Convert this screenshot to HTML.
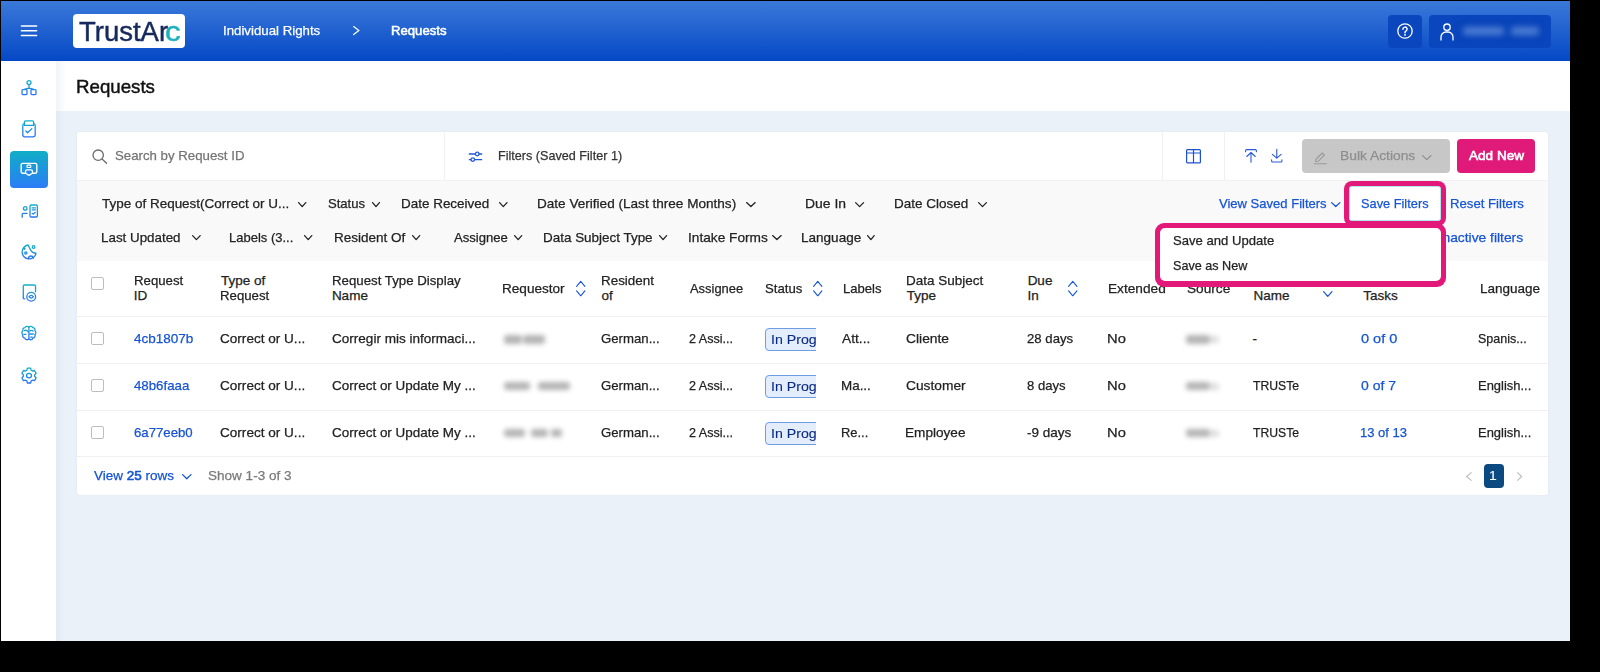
<!DOCTYPE html>
<html><head><meta charset="utf-8"><style>
html,body{margin:0;padding:0;background:#000;width:1600px;height:672px;overflow:hidden}
.t{position:absolute;white-space:nowrap;line-height:1;-webkit-text-stroke:0.25px currentColor;font-family:"Liberation Sans",sans-serif;transform-origin:0 0}
.r{position:absolute}
svg.r{overflow:visible}
</style></head><body>
<div class="r" style="left:1px;top:1px;width:1569px;height:640px;background:#EAF1F9"></div>
<div class="r" style="left:1px;top:1px;width:1569px;height:60px;background:linear-gradient(#3a79d9,#0548c6)"></div>
<svg class="r" style="left:20px;top:24px;width:18px;height:14px;" viewBox="0 0 18 14" fill="none"><path d="M1.4 2h15.2M1.4 6.8h15.2M1.4 11.4h15.2" stroke="#fff" stroke-width="1.5" stroke-linecap="round"/></svg>
<div class="r" style="left:72.5px;top:14px;width:112.0px;height:34px;background:#fff;border-radius:4px"></div>
<div class="t" style="left:78.88px;top:19.04px;font-size:27px;color:#17295c;transform:scaleX(1.0180);-webkit-text-stroke:0.45px #17295c;">TrustAr</div>
<div class="t" style="left:164.67px;top:19.04px;font-size:27px;color:#1fb0bd;transform:scaleX(1.1597);-webkit-text-stroke:0.45px #1fb0bd;">c</div>
<div class="t" style="left:223.28px;top:24.32px;font-size:13.5px;color:#fff;transform:scaleX(0.9813);">Individual Rights</div>
<svg class="r" style="left:352.8px;top:26.3px;width:6.5px;height:9.2px;overflow:visible;" viewBox="0 0 6.5 9.2" fill="none"><path d="M0.6 0.6 L5.9 4.6 L0.6 8.6" stroke="#fff" stroke-width="1.25" stroke-linecap="round" stroke-linejoin="round"/></svg>
<div class="t" style="left:390.92px;top:24.32px;font-size:13.5px;color:#fff;transform:scaleX(0.9741);-webkit-text-stroke:0.55px #fff;">Requests</div>
<div class="r" style="left:1388.3px;top:14.5px;width:33.5px;height:33.0px;background:#0a47bf;border-radius:4px"></div>
<svg class="r" style="left:1397px;top:22.5px;width:16px;height:16.0px;" viewBox="0 0 16 16" fill="none"><circle cx="8" cy="8" r="7.2" stroke="#fff" stroke-width="1.3"/><path d="M5.9 6.2a2.1 2.1 0 1 1 3 1.9c-.6.3-.9.7-.9 1.3v.4" stroke="#fff" stroke-width="1.5" stroke-linecap="round"/><circle cx="8" cy="11.9" r=".9" fill="#fff"/></svg>
<div class="r" style="left:1429.3px;top:14.5px;width:121.5px;height:33.0px;background:#0a47bf;border-radius:4px"></div>
<svg class="r" style="left:1440px;top:22.5px;width:14px;height:17.5px;" viewBox="0 0 14 17.5" fill="none"><circle cx="7" cy="4.2" r="3.2" stroke="#fff" stroke-width="1.3"/><path d="M1 17.5v-3.5a5 5 0 0 1 5-5h2a5 5 0 0 1 5 5v3.5" stroke="#fff" stroke-width="1.3"/></svg>
<div class="r" style="left:1455px;top:18px;width:91px;height:26px;background:rgba(0,40,150,.12);filter:blur(2px)"></div>
<div class="r" style="left:1463px;top:27px;width:41px;height:8px;background:#7fa6e6;filter:blur(3px);opacity:.6;border-radius:3px"></div>
<div class="r" style="left:1511px;top:27px;width:28px;height:8px;background:#7fa6e6;filter:blur(3px);opacity:.6;border-radius:3px"></div>
<div class="r" style="left:1px;top:61px;width:55.4px;height:580px;background:#fff"></div>
<div class="r" style="left:56px;top:61px;width:8px;height:580px;background:linear-gradient(90deg,rgba(30,60,120,.045),rgba(30,60,120,0))"></div>
<div class="r" style="left:56.4px;top:61px;width:1513.6px;height:50px;background:#fff"></div>
<div class="r" style="left:56px;top:61px;width:10px;height:50px;background:linear-gradient(90deg,rgba(30,60,120,.06),rgba(30,60,120,0))"></div>
<div class="t" style="left:76.17px;top:77.22px;font-size:19px;color:#111;transform:scaleX(0.9830);-webkit-text-stroke:0.45px #111;">Requests</div>
<svg class="r" style="left:21px;top:79.5px;width:16px;height:15.5px;" viewBox="0 0 16 15.5" fill="none"><defs><linearGradient id="g1" gradientUnits="userSpaceOnUse" x1="0" y1="0" x2="0" y2="15.5"><stop offset="0" stop-color="#12b4c8"/><stop offset="1" stop-color="#2a6ff5"/></linearGradient></defs><circle cx="8" cy="2.6" r="2" stroke="url(#g1)" stroke-width="1.3" stroke-linecap="round" stroke-linejoin="round"/><path d="M8 4.6v3.6M3.8 9.2 8 8.2l4.2 1" stroke="url(#g1)" stroke-width="1.3" stroke-linecap="round" stroke-linejoin="round"/><rect x="1" y="9.6" width="5" height="5" rx=".8" stroke="url(#g1)" stroke-width="1.3" stroke-linecap="round" stroke-linejoin="round"/><rect x="10" y="9.6" width="5" height="5" rx=".8" stroke="url(#g1)" stroke-width="1.3" stroke-linecap="round" stroke-linejoin="round"/></svg>
<svg class="r" style="left:22px;top:119.5px;width:14px;height:17.5px;" viewBox="0 0 14 17.5" fill="none"><defs><linearGradient id="g2" gradientUnits="userSpaceOnUse" x1="0" y1="0" x2="0" y2="17.5"><stop offset="0" stop-color="#12b4c8"/><stop offset="1" stop-color="#2a6ff5"/></linearGradient></defs><rect x="0.8" y="3.6" width="12.4" height="13.2" rx="1.8" stroke="url(#g2)" stroke-width="1.3" stroke-linecap="round" stroke-linejoin="round"/><path d="M2.4 5.4V2c0-.6.5-1.1 1.1-1.1h7c.6 0 1.1.5 1.1 1.1v3.4Z" fill="#fff" stroke="url(#g2)" stroke-width="1.3" stroke-linecap="round" stroke-linejoin="round"/><path d="m3.9 11 1.7 1.8 4.2-4.2" stroke="url(#g2)" stroke-width="1.3" stroke-linecap="round" stroke-linejoin="round"/></svg>
<div class="r" style="left:10px;top:151px;width:38px;height:37px;background:linear-gradient(#10aec6,#2b7cf6);border-radius:4px"></div>
<svg class="r" style="left:20px;top:162px;width:18px;height:14px;" viewBox="0 0 18 14" fill="none"><rect x="1.2" y="1.4" width="15.6" height="9.8" rx="1.4" stroke="#fff" stroke-width="1.4"/><rect x="7" y="3.1" width="3.8" height="2.4" rx=".6" stroke="#fff" stroke-width="1.1"/><path d="M5.6 11.2V9.1c0-.7.5-1.2 1.2-1.2h4.4c.7 0 1.2.5 1.2 1.2v2.1L9 13.4Z" stroke="#fff" stroke-width="1.3" stroke-linejoin="round" fill="#2089e8"/></svg>
<svg class="r" style="left:19.5px;top:203.5px;width:18.0px;height:14.0px;" viewBox="0 0 18 14" fill="none"><defs><linearGradient id="g3" gradientUnits="userSpaceOnUse" x1="0" y1="0" x2="0" y2="14.0"><stop offset="0" stop-color="#12b4c8"/><stop offset="1" stop-color="#2a6ff5"/></linearGradient></defs><circle cx="5.2" cy="4.4" r="1.8" stroke="url(#g3)" stroke-width="1.3" stroke-linecap="round" stroke-linejoin="round"/><path d="M2.2 13.2v-3c0-.5.4-.9.9-.9h4" stroke="url(#g3)" stroke-width="1.3" stroke-linecap="round" stroke-linejoin="round"/><rect x="10" y="1" width="7.4" height="12" rx="1.2" stroke="url(#g3)" stroke-width="1.3" stroke-linecap="round" stroke-linejoin="round"/><path d="M12.2 3.9h3.2M12.2 5.8h3.2M12.3 9.4l.9.7 1.9-1.6" stroke="url(#g3)" stroke-width="1.3" stroke-linecap="round" stroke-linejoin="round" stroke-width="1.05"/></svg>
<svg class="r" style="left:21px;top:243.5px;width:16px;height:16.0px;" viewBox="0 0 16 16" fill="none"><defs><linearGradient id="g4" gradientUnits="userSpaceOnUse" x1="0" y1="0" x2="0" y2="16.0"><stop offset="0" stop-color="#12b4c8"/><stop offset="1" stop-color="#2a6ff5"/></linearGradient></defs><path d="M7.2 1A7 7 0 1 0 15 9.2C13 9.2 10.6 7.8 9.4 5.6 8.6 4.2 7.8 2.6 7.2 1Z" stroke="url(#g4)" stroke-width="1.3" stroke-linecap="round" stroke-linejoin="round" stroke-width="1.2"/><circle cx="12.6" cy="3" r="1.3" stroke="url(#g4)" stroke-width="1.3" stroke-linecap="round" stroke-linejoin="round" stroke-width="1.2"/><circle cx="4.8" cy="9" r="1.1" stroke="url(#g4)" stroke-width="1.3" stroke-linecap="round" stroke-linejoin="round" stroke-width="1.2"/><path d="M7.3 14.6c.3-1.6 1.3-2.6 2.6-2.6s2.2.9 2.5 2" stroke="url(#g4)" stroke-width="1.3" stroke-linecap="round" stroke-linejoin="round" stroke-width="1.2"/><circle cx="3.3" cy="4.6" r=".7" stroke="url(#g4)" stroke-width="1.3" stroke-linecap="round" stroke-linejoin="round" stroke-width="1"/></svg>
<svg class="r" style="left:21.5px;top:283.5px;width:15.0px;height:18.0px;" viewBox="0 0 15 18" fill="none"><defs><linearGradient id="g5" gradientUnits="userSpaceOnUse" x1="0" y1="0" x2="0" y2="18.0"><stop offset="0" stop-color="#12b4c8"/><stop offset="1" stop-color="#2a6ff5"/></linearGradient></defs><path d="M2.7 14.9h-.4c-.6 0-1-.4-1-1V2c0-.6.4-1 1-1h10.2c.6 0 1 .4 1 1v5.8" stroke="url(#g5)" stroke-width="1.3" stroke-linecap="round" stroke-linejoin="round" stroke-width="1.2"/><circle cx="9.2" cy="12.7" r="4.4" stroke="url(#g5)" stroke-width="1.3" stroke-linecap="round" stroke-linejoin="round" stroke-width="1.2"/><path d="M7 12.7c.7-.9 1.4-1.4 2.2-1.4s1.5.5 2.2 1.4c-.7.9-1.4 1.4-2.2 1.4S7.7 13.6 7 12.7Z" stroke="url(#g5)" stroke-width="1.3" stroke-linecap="round" stroke-linejoin="round" stroke-width="1"/></svg>
<svg class="r" style="left:21.2px;top:325px;width:15.8px;height:16.5px;" viewBox="0 0 16 16.5" fill="none"><defs><linearGradient id="g6" gradientUnits="userSpaceOnUse" x1="0" y1="0" x2="0" y2="16.5"><stop offset="0" stop-color="#12b4c8"/><stop offset="1" stop-color="#2a6ff5"/></linearGradient></defs><path d="M8 2.2C7 .8 4.6 1 4 2.6 2.3 2.6 1.4 4.3 2 5.6.6 6.5.7 8.8 2 9.6c-.9 1.6.2 3.6 2 3.5.4 1.8 2.8 2.3 4 .9 1.2 1.4 3.6.9 4-.9 1.8.1 2.9-1.9 2-3.5 1.3-.8 1.4-3.1 0-4 .6-1.3-.3-3-2-3-.6-1.6-3-1.8-4-.4Z" stroke="url(#g6)" stroke-width="1.3" stroke-linecap="round" stroke-linejoin="round" stroke-width="1.15"/><path d="M8 2.2v12.3M3.6 5.6c1.2-.6 2.6-.3 3.4.9M3.4 9.3h1.6M9.4 5.8c.9-.7 2-.6 2.8.2M9.2 9h3.2M9.8 12.2h1.6" stroke="url(#g6)" stroke-width="1.3" stroke-linecap="round" stroke-linejoin="round" stroke-width="1.05"/></svg>
<svg class="r" style="left:21px;top:367px;width:16px;height:16px;" viewBox="0 0 16 16" fill="none"><defs><linearGradient id="g7" gradientUnits="userSpaceOnUse" x1="0" y1="0" x2="0" y2="16.0"><stop offset="0" stop-color="#12b4c8"/><stop offset="1" stop-color="#2a6ff5"/></linearGradient></defs><path d="M6.4 1.2h3.2l.6 2.1 1.2.7 2.1-.5 1.6 2.8-1.5 1.6v1.4l1.5 1.6-1.6 2.8-2.1-.5-1.2.7-.6 2.1H6.4l-.6-2.1-1.2-.7-2.1.5L.9 10.9l1.5-1.6V7.9L.9 6.3 2.5 3.5l2.1.5 1.2-.7Z" stroke="url(#g7)" stroke-width="1.3" stroke-linecap="round" stroke-linejoin="round" stroke-width="1.15"/><ellipse cx="8" cy="8.6" rx="2.5" ry="2.3" stroke="url(#g7)" stroke-width="1.3" stroke-linecap="round" stroke-linejoin="round" stroke-width="1.15"/></svg>
<div class="r" style="left:77px;top:132px;width:1471px;height:362.6px;background:#fff;border-radius:3px;box-shadow:0 0 3px rgba(0,0,0,.05)"></div>
<div class="r" style="left:77px;top:180px;width:1471px;height:81.25px;background:#f9f9f9"></div>
<div class="r" style="left:77px;top:179.5px;width:1471px;height:1.0px;background:#f1f1f1"></div>
<div class="r" style="left:444px;top:132px;width:1px;height:48px;background:#f0f0f0"></div>
<div class="r" style="left:1162px;top:132px;width:1px;height:48px;background:#f0f0f0"></div>
<div class="r" style="left:1223.5px;top:132px;width:1.0px;height:48px;background:#f0f0f0"></div>
<svg class="r" style="left:91.5px;top:148.5px;width:16.0px;height:14.5px;" viewBox="0 0 16 14.5" fill="none"><circle cx="6.2" cy="6.2" r="5.2" stroke="#6b6b6b" stroke-width="1.3"/><path d="m10 10 4.6 4.2" stroke="#6b6b6b" stroke-width="1.3" stroke-linecap="round"/></svg>
<div class="t" style="left:114.90px;top:149.27px;font-size:13.5px;color:#747474;transform:scaleX(0.9801);">Search by Request ID</div>
<svg class="r" style="left:467.5px;top:150.5px;width:15.0px;height:11.5px;" viewBox="0 0 15 11.5" fill="none"><path d="M.8 3h13.4M.8 8.6h13.4" stroke="#2356d8" stroke-width="1.3"/><circle cx="9.2" cy="3" r="1.8" fill="#fff" stroke="#2356d8" stroke-width="1.3"/><circle cx="4.8" cy="8.6" r="1.8" fill="#fff" stroke="#2356d8" stroke-width="1.3"/></svg>
<div class="t" style="left:497.66px;top:148.77px;font-size:13.5px;color:#333;transform:scaleX(0.9348);">Filters (Saved Filter 1)</div>
<svg class="r" style="left:1186px;top:148.5px;width:15px;height:14.5px;" viewBox="0 0 15 14.5" fill="none"><rect x=".6" y=".6" width="13.8" height="13.3" rx="1" stroke="#1f52d2" stroke-width="1.2"/><path d="M.6 4h13.8M7.5 .6v13.3" stroke="#1f52d2" stroke-width="1.2"/></svg>
<svg class="r" style="left:1245px;top:149px;width:12px;height:14px;" viewBox="0 0 12 14" fill="none"><path d="M.6 2.8V1.6c0-.5.4-1 1-1h8.8c.6 0 1 .5 1 1v1.2M6 3.5V13.3M1.8 7.5 6 3.5l4.2 4" stroke="#2a5ad8" stroke-width="1.1" stroke-linecap="round" stroke-linejoin="round"/></svg>
<svg class="r" style="left:1271px;top:149px;width:11.5px;height:14px;" viewBox="0 0 11.5 14" fill="none"><path d="M.6 10.8V12c0 .6.4 1 1 1h8.3c.6 0 1-.4 1-1v-1.2M5.75 .4V9.2M1.4 5.3l4.35 3.9 4.35-3.9" stroke="#2a5ad8" stroke-width="1.1" stroke-linecap="round" stroke-linejoin="round"/></svg>
<div class="r" style="left:1302px;top:139px;width:148px;height:33.80000000000001px;background:#c7c7c7;border-radius:4px"></div>
<svg class="r" style="left:1312.5px;top:151.5px;width:15.0px;height:12.5px;" viewBox="0 0 15 12.5" fill="none"><path d="M2.5 9.5 3.2 7 9.3 1l2.2 2.2-6.1 6L2.5 9.5ZM.8 11.8h13" stroke="#9a9a9a" stroke-width="1.1" stroke-linejoin="round"/></svg>
<div class="t" style="left:1339.87px;top:148.97px;font-size:13.5px;color:#8e8e8e;transform:scaleX(1.0230);">Bulk Actions</div>
<svg class="r" style="left:1422px;top:154.5px;width:9.5px;height:5.300000000000011px;overflow:visible;" viewBox="0 0 9.5 5.300000000000011" fill="none"><path d="M0.6 0.6 L4.75 4.700000000000012 L8.9 0.6" stroke="#8e8e8e" stroke-width="1.2" stroke-linecap="round" stroke-linejoin="round"/></svg>
<div class="r" style="left:1457px;top:139px;width:77.59999999999991px;height:33.80000000000001px;background:#e01a79;border-radius:4px"></div>
<div class="t" style="left:1468.67px;top:148.97px;font-size:13.5px;color:#fff;transform:scaleX(1.0039);-webkit-text-stroke:0.6px #fff;">Add New</div>
<div class="t" style="left:102.10px;top:196.97px;font-size:13.5px;color:#222222;transform:scaleX(0.9977);">Type of Request(Correct or U...</div>
<svg class="r" style="left:298px;top:201.8px;width:8.399999999999977px;height:5.199999999999989px;overflow:visible;" viewBox="0 0 8.399999999999977 5.199999999999989" fill="none"><path d="M0.6 0.6 L4.199999999999989 4.599999999999989 L7.799999999999978 0.6" stroke="#222222" stroke-width="1.3" stroke-linecap="round" stroke-linejoin="round"/></svg>
<div class="t" style="left:328.41px;top:196.97px;font-size:13.5px;color:#222222;transform:scaleX(0.9685);">Status</div>
<svg class="r" style="left:372px;top:201.8px;width:8px;height:5.199999999999989px;overflow:visible;" viewBox="0 0 8 5.199999999999989" fill="none"><path d="M0.6 0.6 L4.0 4.599999999999989 L7.4 0.6" stroke="#222222" stroke-width="1.3" stroke-linecap="round" stroke-linejoin="round"/></svg>
<div class="t" style="left:401.20px;top:196.97px;font-size:13.5px;color:#222222;transform:scaleX(0.9969);">Date Received</div>
<svg class="r" style="left:499.4px;top:201.8px;width:8.600000000000023px;height:5.199999999999989px;overflow:visible;" viewBox="0 0 8.600000000000023 5.199999999999989" fill="none"><path d="M0.6 0.6 L4.300000000000011 4.599999999999989 L8.000000000000023 0.6" stroke="#222222" stroke-width="1.3" stroke-linecap="round" stroke-linejoin="round"/></svg>
<div class="t" style="left:536.89px;top:196.97px;font-size:13.5px;color:#222222;transform:scaleX(1.0054);">Date Verified (Last three Months)</div>
<svg class="r" style="left:745.6px;top:201.8px;width:9.799999999999955px;height:5.199999999999989px;overflow:visible;" viewBox="0 0 9.799999999999955 5.199999999999989" fill="none"><path d="M0.6 0.6 L4.899999999999977 4.599999999999989 L9.199999999999955 0.6" stroke="#222222" stroke-width="1.3" stroke-linecap="round" stroke-linejoin="round"/></svg>
<div class="t" style="left:804.56px;top:196.97px;font-size:13.5px;color:#222222;transform:scaleX(1.0320);">Due In</div>
<svg class="r" style="left:855px;top:201.8px;width:9.200000000000045px;height:5.199999999999989px;overflow:visible;" viewBox="0 0 9.200000000000045 5.199999999999989" fill="none"><path d="M0.6 0.6 L4.600000000000023 4.599999999999989 L8.600000000000046 0.6" stroke="#222222" stroke-width="1.3" stroke-linecap="round" stroke-linejoin="round"/></svg>
<div class="t" style="left:893.99px;top:196.97px;font-size:13.5px;color:#222222;transform:scaleX(0.9985);">Date Closed</div>
<svg class="r" style="left:978px;top:201.8px;width:9px;height:5.199999999999989px;overflow:visible;" viewBox="0 0 9 5.199999999999989" fill="none"><path d="M0.6 0.6 L4.5 4.599999999999989 L8.4 0.6" stroke="#222222" stroke-width="1.3" stroke-linecap="round" stroke-linejoin="round"/></svg>
<div class="t" style="left:1219.24px;top:196.97px;font-size:13.5px;color:#1553d6;transform:scaleX(0.9649);">View Saved Filters</div>
<svg class="r" style="left:1331px;top:201.8px;width:9.5px;height:5.199999999999989px;overflow:visible;" viewBox="0 0 9.5 5.199999999999989" fill="none"><path d="M0.6 0.6 L4.75 4.599999999999989 L8.9 0.6" stroke="#1553d6" stroke-width="1.3" stroke-linecap="round" stroke-linejoin="round"/></svg>
<div class="t" style="left:101.30px;top:230.57px;font-size:13.5px;color:#222222;transform:scaleX(0.9907);">Last Updated</div>
<svg class="r" style="left:191.6px;top:235.4px;width:8.800000000000011px;height:5.199999999999989px;overflow:visible;" viewBox="0 0 8.800000000000011 5.199999999999989" fill="none"><path d="M0.6 0.6 L4.400000000000006 4.599999999999989 L8.200000000000012 0.6" stroke="#222222" stroke-width="1.3" stroke-linecap="round" stroke-linejoin="round"/></svg>
<div class="t" style="left:229.33px;top:230.57px;font-size:13.5px;color:#222222;transform:scaleX(0.9620);">Labels (3...</div>
<svg class="r" style="left:304px;top:235.4px;width:8.399999999999977px;height:5.199999999999989px;overflow:visible;" viewBox="0 0 8.399999999999977 5.199999999999989" fill="none"><path d="M0.6 0.6 L4.199999999999989 4.599999999999989 L7.799999999999978 0.6" stroke="#222222" stroke-width="1.3" stroke-linecap="round" stroke-linejoin="round"/></svg>
<div class="t" style="left:333.69px;top:230.57px;font-size:13.5px;color:#222222;transform:scaleX(1.0001);">Resident Of</div>
<svg class="r" style="left:411.7px;top:235.4px;width:8.300000000000011px;height:5.199999999999989px;overflow:visible;" viewBox="0 0 8.300000000000011 5.199999999999989" fill="none"><path d="M0.6 0.6 L4.150000000000006 4.599999999999989 L7.700000000000012 0.6" stroke="#222222" stroke-width="1.3" stroke-linecap="round" stroke-linejoin="round"/></svg>
<div class="t" style="left:453.67px;top:230.57px;font-size:13.5px;color:#222222;transform:scaleX(0.9707);">Assignee</div>
<svg class="r" style="left:513.7px;top:235.4px;width:8.299999999999955px;height:5.199999999999989px;overflow:visible;" viewBox="0 0 8.299999999999955 5.199999999999989" fill="none"><path d="M0.6 0.6 L4.149999999999977 4.599999999999989 L7.699999999999955 0.6" stroke="#222222" stroke-width="1.3" stroke-linecap="round" stroke-linejoin="round"/></svg>
<div class="t" style="left:543.30px;top:230.57px;font-size:13.5px;color:#222222;transform:scaleX(0.9957);">Data Subject Type</div>
<svg class="r" style="left:658.8px;top:235.4px;width:8.200000000000045px;height:5.199999999999989px;overflow:visible;" viewBox="0 0 8.200000000000045 5.199999999999989" fill="none"><path d="M0.6 0.6 L4.100000000000023 4.599999999999989 L7.600000000000046 0.6" stroke="#222222" stroke-width="1.3" stroke-linecap="round" stroke-linejoin="round"/></svg>
<div class="t" style="left:688.14px;top:230.57px;font-size:13.5px;color:#222222;transform:scaleX(1.0125);">Intake Forms</div>
<svg class="r" style="left:771.6px;top:235.4px;width:9.799999999999955px;height:5.199999999999989px;overflow:visible;" viewBox="0 0 9.799999999999955 5.199999999999989" fill="none"><path d="M0.6 0.6 L4.899999999999977 4.599999999999989 L9.199999999999955 0.6" stroke="#222222" stroke-width="1.3" stroke-linecap="round" stroke-linejoin="round"/></svg>
<div class="t" style="left:800.69px;top:230.57px;font-size:13.5px;color:#222222;transform:scaleX(1.0025);">Language</div>
<svg class="r" style="left:866.8px;top:235.4px;width:7.800000000000068px;height:5.199999999999989px;overflow:visible;" viewBox="0 0 7.800000000000068 5.199999999999989" fill="none"><path d="M0.6 0.6 L3.900000000000034 4.599999999999989 L7.200000000000069 0.6" stroke="#222222" stroke-width="1.3" stroke-linecap="round" stroke-linejoin="round"/></svg>
<div class="t" style="left:1449.92px;top:196.97px;font-size:13.5px;color:#1553d6;transform:scaleX(0.9748);">Reset Filters</div>
<div class="t" style="left:1401.37px;top:230.57px;font-size:13.5px;color:#1553d6;transform:scaleX(1.0237);">Show inactive filters</div>
<div class="r" style="left:77px;top:315.5px;width:1471px;height:1.0px;background:#efefef"></div>
<div class="r" style="left:90.5px;top:276.75px;width:13.200000000000003px;height:13.0px;border:1px solid #bdbdbd;border-radius:2px;box-sizing:border-box;background:#fff"></div>
<div class="t" style="left:133.92px;top:274.07px;font-size:13.5px;color:#222222;transform:scaleX(0.9781);">Request</div>
<div class="t" style="left:133.75px;top:289.32px;font-size:13.5px;color:#222222;">ID</div>
<div class="t" style="left:220.95px;top:274.07px;font-size:13.5px;color:#222222;">Type of</div>
<div class="t" style="left:220.17px;top:289.32px;font-size:13.5px;color:#222222;transform:scaleX(0.9781);">Request</div>
<div class="t" style="left:331.91px;top:274.07px;font-size:13.5px;color:#222222;transform:scaleX(0.9813);">Request Type Display</div>
<div class="t" style="left:331.89px;top:289.32px;font-size:13.5px;color:#222222;">Name</div>
<div class="t" style="left:502.14px;top:282.32px;font-size:13.5px;color:#222222;transform:scaleX(1.0049);">Requestor</div>
<svg class="r" style="left:576px;top:281px;width:9.5px;height:15.199999999999989px;overflow:visible;" viewBox="0 0 9.5 15.199999999999989" fill="none"><path d="M.6 5.3 4.75 .4 8.9 5.3M.6 9.899999999999988 4.75 14.799999999999988 8.9 9.899999999999988" stroke="#1553d6" stroke-width="1.1" stroke-linecap="round" stroke-linejoin="round"/></svg>
<div class="t" style="left:600.90px;top:274.07px;font-size:13.5px;color:#222222;transform:scaleX(0.9938);">Resident</div>
<div class="t" style="left:601.43px;top:289.32px;font-size:13.5px;color:#222222;">of</div>
<div class="t" style="left:689.97px;top:282.32px;font-size:13.5px;color:#222222;transform:scaleX(0.9561);">Assignee</div>
<div class="t" style="left:765.15px;top:282.32px;font-size:13.5px;color:#222222;transform:scaleX(0.9752);">Status</div>
<svg class="r" style="left:813.2px;top:281px;width:9.5px;height:15.199999999999989px;overflow:visible;" viewBox="0 0 9.5 15.199999999999989" fill="none"><path d="M.6 5.3 4.75 .4 8.9 5.3M.6 9.899999999999988 4.75 14.799999999999988 8.9 9.899999999999988" stroke="#1553d6" stroke-width="1.1" stroke-linecap="round" stroke-linejoin="round"/></svg>
<div class="t" style="left:843.18px;top:282.32px;font-size:13.5px;color:#222222;transform:scaleX(0.9690);">Labels</div>
<div class="t" style="left:905.89px;top:274.07px;font-size:13.5px;color:#222222;transform:scaleX(0.9988);">Data Subject</div>
<div class="t" style="left:906.70px;top:289.32px;font-size:13.5px;color:#222222;">Type</div>
<div class="t" style="left:1027.64px;top:274.07px;font-size:13.5px;color:#222222;">Due</div>
<div class="t" style="left:1027.50px;top:289.32px;font-size:13.5px;color:#222222;">In</div>
<svg class="r" style="left:1067.7px;top:281px;width:9.5px;height:15.199999999999989px;overflow:visible;" viewBox="0 0 9.5 15.199999999999989" fill="none"><path d="M.6 5.3 4.75 .4 8.9 5.3M.6 9.899999999999988 4.75 14.799999999999988 8.9 9.899999999999988" stroke="#1553d6" stroke-width="1.1" stroke-linecap="round" stroke-linejoin="round"/></svg>
<div class="t" style="left:1107.63px;top:282.32px;font-size:13.5px;color:#222222;transform:scaleX(1.0124);">Extended</div>
<div class="t" style="left:1186.88px;top:282.32px;font-size:13.5px;color:#222222;transform:scaleX(1.0106);">Source</div>
<div class="t" style="left:1253.35px;top:274.07px;font-size:13.5px;color:#222222;">Intake Form</div>
<div class="t" style="left:1253.49px;top:289.32px;font-size:13.5px;color:#222222;">Name</div>
<svg class="r" style="left:1323px;top:290.5px;width:9.599999999999909px;height:5.899999999999977px;overflow:visible;" viewBox="0 0 9.599999999999909 5.899999999999977" fill="none"><path d="M0.6 0.6 L4.7999999999999545 5.299999999999978 L8.99999999999991 0.6" stroke="#1553d6" stroke-width="1.2" stroke-linecap="round" stroke-linejoin="round"/></svg>
<div class="t" style="left:1363.30px;top:274.07px;font-size:13.5px;color:#222222;">Total</div>
<div class="t" style="left:1363.30px;top:289.32px;font-size:13.5px;color:#222222;">Tasks</div>
<div class="t" style="left:1479.69px;top:282.32px;font-size:13.5px;color:#222222;transform:scaleX(1.0008);">Language</div>
<div class="r" style="left:77px;top:363px;width:1471px;height:1px;background:#efefef"></div>
<div class="r" style="left:90.5px;top:331.75px;width:13.200000000000003px;height:13.0px;border:1px solid #bdbdbd;border-radius:2px;box-sizing:border-box;background:#fff"></div>
<div class="t" style="left:134.19px;top:331.82px;font-size:13.5px;color:#1553d6;transform:scaleX(1.0012);">4cb1807b</div>
<div class="t" style="left:219.81px;top:331.82px;font-size:13.5px;color:#222222;transform:scaleX(1.0049);">Correct or U...</div>
<div class="t" style="left:331.81px;top:331.82px;font-size:13.5px;color:#222222;transform:scaleX(1.0028);">Corregir mis informaci...</div>
<div class="r" style="left:504px;top:335.0px;width:18px;height:8.5px;background:#444;filter:blur(2.4px);border-radius:3px;opacity:0.4"></div>
<div class="r" style="left:523px;top:335.0px;width:22px;height:8.5px;background:#444;filter:blur(2.4px);border-radius:3px;opacity:0.4"></div>
<div class="t" style="left:601.34px;top:331.82px;font-size:13.5px;color:#222222;transform:scaleX(0.9767);">German...</div>
<div class="t" style="left:688.87px;top:331.82px;font-size:13.5px;color:#222222;transform:scaleX(0.9315);">2 Assi...</div>
<div class="r" style="left:765px;top:328.25px;width:65px;height:22.5px;background:#e3edfb;border:1px solid #6f9de3;border-radius:4px;box-sizing:border-box"></div>
<div class="r" style="left:816px;top:326.25px;width:20px;height:25.5px;background:#fff"></div>
<div class="t" style="left:771.19px;top:333.07px;font-size:13.5px;color:#0a2a86;transform:scaleX(1.0505);-webkit-text-stroke:0.1px #0a2a86;">In Prog</div>
<div class="r" style="left:816px;top:326.25px;width:20px;height:25.5px;background:#fff"></div>
<div class="t" style="left:842.47px;top:331.82px;font-size:13.5px;color:#222222;transform:scaleX(1.0189);">Att...</div>
<div class="t" style="left:905.55px;top:331.82px;font-size:13.5px;color:#222222;transform:scaleX(1.0249);">Cliente</div>
<div class="t" style="left:1026.84px;top:331.82px;font-size:13.5px;color:#222222;transform:scaleX(0.9758);">28 days</div>
<div class="t" style="left:1106.79px;top:331.82px;font-size:13.5px;color:#222222;transform:scaleX(1.0910);">No</div>
<div class="r" style="left:1186px;top:335.0px;width:24px;height:8.5px;background:#444;filter:blur(2.4px);border-radius:3px;opacity:0.4"></div>
<div class="r" style="left:1210px;top:335.75px;width:9px;height:7.0px;background:#444;filter:blur(2.4px);border-radius:3px;opacity:0.18"></div>
<div class="t" style="left:1252.40px;top:331.82px;font-size:13.5px;color:#222222;">-</div>
<div class="t" style="left:1360.73px;top:331.82px;font-size:13.5px;color:#1553d6;transform:scaleX(1.0758);">0 of 0</div>
<div class="t" style="left:1478.43px;top:331.82px;font-size:13.5px;color:#222222;transform:scaleX(0.9273);">Spanis...</div>
<div class="r" style="left:77px;top:409.5px;width:1471px;height:1.0px;background:#efefef"></div>
<div class="r" style="left:90.5px;top:378.5px;width:13.200000000000003px;height:13.0px;border:1px solid #bdbdbd;border-radius:2px;box-sizing:border-box;background:#fff"></div>
<div class="t" style="left:134.20px;top:378.57px;font-size:13.5px;color:#1553d6;transform:scaleX(0.9822);">48b6faaa</div>
<div class="t" style="left:219.81px;top:378.57px;font-size:13.5px;color:#222222;transform:scaleX(1.0049);">Correct or U...</div>
<div class="t" style="left:331.82px;top:378.57px;font-size:13.5px;color:#222222;transform:scaleX(0.9974);">Correct or Update My ...</div>
<div class="r" style="left:504px;top:381.75px;width:26px;height:8.5px;background:#444;filter:blur(2.4px);border-radius:3px;opacity:0.4"></div>
<div class="r" style="left:538px;top:381.75px;width:32px;height:8.5px;background:#444;filter:blur(2.4px);border-radius:3px;opacity:0.4"></div>
<div class="t" style="left:601.34px;top:378.57px;font-size:13.5px;color:#222222;transform:scaleX(0.9767);">German...</div>
<div class="t" style="left:688.87px;top:378.57px;font-size:13.5px;color:#222222;transform:scaleX(0.9315);">2 Assi...</div>
<div class="r" style="left:765px;top:375px;width:65px;height:22.5px;background:#e3edfb;border:1px solid #6f9de3;border-radius:4px;box-sizing:border-box"></div>
<div class="r" style="left:816px;top:373px;width:20px;height:25.5px;background:#fff"></div>
<div class="t" style="left:771.19px;top:379.82px;font-size:13.5px;color:#0a2a86;transform:scaleX(1.0505);-webkit-text-stroke:0.1px #0a2a86;">In Prog</div>
<div class="r" style="left:816px;top:373px;width:20px;height:25.5px;background:#fff"></div>
<div class="t" style="left:841.40px;top:378.57px;font-size:13.5px;color:#222222;transform:scaleX(0.9940);">Ma...</div>
<div class="t" style="left:905.55px;top:378.57px;font-size:13.5px;color:#222222;transform:scaleX(1.0199);">Customer</div>
<div class="t" style="left:1026.93px;top:378.57px;font-size:13.5px;color:#222222;transform:scaleX(0.9690);">8 days</div>
<div class="t" style="left:1106.79px;top:378.57px;font-size:13.5px;color:#222222;transform:scaleX(1.0910);">No</div>
<div class="r" style="left:1186px;top:381.75px;width:24px;height:8.5px;background:#444;filter:blur(2.4px);border-radius:3px;opacity:0.4"></div>
<div class="r" style="left:1210px;top:382.5px;width:9px;height:7.0px;background:#444;filter:blur(2.4px);border-radius:3px;opacity:0.18"></div>
<div class="t" style="left:1252.73px;top:378.57px;font-size:13.5px;color:#222222;transform:scaleX(0.9041);">TRUSTe</div>
<div class="t" style="left:1360.75px;top:378.57px;font-size:13.5px;color:#1553d6;transform:scaleX(1.0347);">0 of 7</div>
<div class="t" style="left:1477.94px;top:378.57px;font-size:13.5px;color:#222222;transform:scaleX(0.9588);">English...</div>
<div class="r" style="left:77px;top:456px;width:1471px;height:1px;background:#efefef"></div>
<div class="r" style="left:90.5px;top:425.5px;width:13.200000000000003px;height:13.0px;border:1px solid #bdbdbd;border-radius:2px;box-sizing:border-box;background:#fff"></div>
<div class="t" style="left:133.83px;top:425.57px;font-size:13.5px;color:#1553d6;transform:scaleX(0.9771);">6a77eeb0</div>
<div class="t" style="left:219.81px;top:425.57px;font-size:13.5px;color:#222222;transform:scaleX(1.0049);">Correct or U...</div>
<div class="t" style="left:331.82px;top:425.57px;font-size:13.5px;color:#222222;transform:scaleX(0.9974);">Correct or Update My ...</div>
<div class="r" style="left:504px;top:428.75px;width:21px;height:8.5px;background:#444;filter:blur(2.4px);border-radius:3px;opacity:0.4"></div>
<div class="r" style="left:531px;top:428.75px;width:17px;height:8.5px;background:#444;filter:blur(2.4px);border-radius:3px;opacity:0.4"></div>
<div class="r" style="left:551px;top:428.75px;width:11px;height:8.5px;background:#444;filter:blur(2.4px);border-radius:3px;opacity:0.4"></div>
<div class="t" style="left:601.34px;top:425.57px;font-size:13.5px;color:#222222;transform:scaleX(0.9767);">German...</div>
<div class="t" style="left:688.87px;top:425.57px;font-size:13.5px;color:#222222;transform:scaleX(0.9315);">2 Assi...</div>
<div class="r" style="left:765px;top:422px;width:65px;height:22.5px;background:#e3edfb;border:1px solid #6f9de3;border-radius:4px;box-sizing:border-box"></div>
<div class="r" style="left:816px;top:420px;width:20px;height:25.5px;background:#fff"></div>
<div class="t" style="left:771.19px;top:426.82px;font-size:13.5px;color:#0a2a86;transform:scaleX(1.0505);-webkit-text-stroke:0.1px #0a2a86;">In Prog</div>
<div class="r" style="left:816px;top:420px;width:20px;height:25.5px;background:#fff"></div>
<div class="t" style="left:841.44px;top:425.57px;font-size:13.5px;color:#222222;transform:scaleX(0.9553);">Re...</div>
<div class="t" style="left:905.13px;top:425.57px;font-size:13.5px;color:#222222;transform:scaleX(1.0073);">Employee</div>
<div class="t" style="left:1027.40px;top:425.57px;font-size:13.5px;color:#222222;transform:scaleX(1.0016);">-9 days</div>
<div class="t" style="left:1106.79px;top:425.57px;font-size:13.5px;color:#222222;transform:scaleX(1.0910);">No</div>
<div class="r" style="left:1186px;top:428.75px;width:24px;height:8.5px;background:#444;filter:blur(2.4px);border-radius:3px;opacity:0.4"></div>
<div class="r" style="left:1210px;top:429.5px;width:9px;height:7.0px;background:#444;filter:blur(2.4px);border-radius:3px;opacity:0.18"></div>
<div class="t" style="left:1252.73px;top:425.57px;font-size:13.5px;color:#222222;transform:scaleX(0.9041);">TRUSTe</div>
<div class="t" style="left:1360.31px;top:425.57px;font-size:13.5px;color:#1553d6;transform:scaleX(0.9646);">13 of 13</div>
<div class="t" style="left:1477.94px;top:425.57px;font-size:13.5px;color:#222222;transform:scaleX(0.9588);">English...</div>
<div class="t" style="left:93.94px;top:468.57px;font-size:13.5px;color:#1553d6;transform:scaleX(0.9976);">View <span style="-webkit-text-stroke:0.6px">25</span> rows</div>
<svg class="r" style="left:182px;top:473.5px;width:9.599999999999994px;height:5.300000000000011px;overflow:visible;" viewBox="0 0 9.599999999999994 5.300000000000011" fill="none"><path d="M0.6 0.6 L4.799999999999997 4.700000000000012 L8.999999999999995 0.6" stroke="#1553d6" stroke-width="1.3" stroke-linecap="round" stroke-linejoin="round"/></svg>
<div class="t" style="left:208.49px;top:468.57px;font-size:13.5px;color:#7a7a7a;transform:scaleX(1.0025);">Show 1-3 of 3</div>
<svg class="r" style="left:1465.5px;top:471.5px;width:5.900000000000091px;height:9.0px;overflow:visible;" viewBox="0 0 5.900000000000091 9.0" fill="none"><path d="M5.300000000000091 0.6 L0.6 4.5 L5.300000000000091 8.4" stroke="#bdbdbd" stroke-width="1.1" stroke-linecap="round" stroke-linejoin="round"/></svg>
<div class="r" style="left:1484px;top:463.8px;width:20.200000000000045px;height:24.399999999999977px;background:#0b4a80;border-radius:4px"></div>
<div class="t" style="left:1489.44px;top:469.07px;font-size:13.5px;color:#fff;transform:scaleX(1.0309);-webkit-text-stroke:0.1px #fff;">1</div>
<svg class="r" style="left:1516.7px;top:471.5px;width:5.2999999999999545px;height:9.0px;overflow:visible;" viewBox="0 0 5.2999999999999545 9.0" fill="none"><path d="M0.6 0.6 L4.699999999999955 4.5 L0.6 8.4" stroke="#bdbdbd" stroke-width="1.1" stroke-linecap="round" stroke-linejoin="round"/></svg>
<div class="r" style="left:1344px;top:180.5px;width:101.5px;height:45.5px;background:#e3197a;border-radius:8px"></div>
<div class="r" style="left:1348.8px;top:185.8px;width:92.0px;height:35.19999999999999px;background:#fff;border:1.5px solid #b2e7f1;border-radius:2.5px;box-sizing:border-box"></div>
<div class="t" style="left:1360.92px;top:196.97px;font-size:13.5px;color:#1553d6;transform:scaleX(0.9477);">Save Filters</div>
<div class="r" style="left:1154.6px;top:222.6px;width:291.4000000000001px;height:64.00000000000003px;background:#e3197a;border-radius:9px"></div>
<div class="r" style="left:1159.7px;top:227.7px;width:281.29999999999995px;height:53.80000000000001px;background:#fff;border-radius:5px"></div>
<div class="t" style="left:1173.01px;top:234.17px;font-size:13.5px;color:#222222;transform:scaleX(0.9698);">Save and Update</div>
<div class="t" style="left:1173.03px;top:258.57px;font-size:13.5px;color:#222222;transform:scaleX(0.9347);">Save as New</div>
</body></html>
